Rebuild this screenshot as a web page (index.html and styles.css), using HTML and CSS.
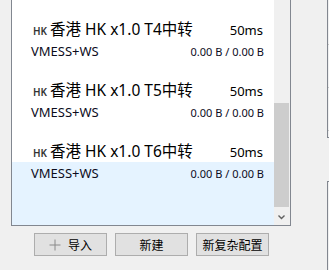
FILE: index.html
```html
<!DOCTYPE html>
<html>
<head>
<meta charset="utf-8">
<link rel="stylesheet" href="styles.css">
</head>
<body>
<div class="page">
  <div class="left">
    <div class="panel">
      <div class="list">
        <div class="item">
          <div class="title"><span class="name"><span class="flag">HK</span>香港 HK x1.0 T4中转</span><span class="ping">50ms</span></div>
          <div class="detail"><span class="proto">VMESS+WS</span><span class="traffic">0.00 B / 0.00 B</span></div>
        </div>
        <div class="item">
          <div class="title"><span class="name"><span class="flag">HK</span>香港 HK x1.0 T5中转</span><span class="ping">50ms</span></div>
          <div class="detail"><span class="proto">VMESS+WS</span><span class="traffic">0.00 B / 0.00 B</span></div>
        </div>
        <div class="item last">
          <div class="title"><span class="name"><span class="flag">HK</span>香港 HK x1.0 T6中转</span><span class="ping">50ms</span></div>
          <div class="detail selected"><span class="proto">VMESS+WS</span><span class="traffic">0.00 B / 0.00 B</span></div>
        </div>
      </div>
      <div class="scrollbar">
        <div class="track-top"></div>
        <div class="thumb"></div>
        <div class="track-rest"></div>
        <div class="arrow">
          <svg width="16" height="16" viewBox="0 0 16 16"><path d="M4.5 6.5 L7.5 9.5 L10.5 6.5" fill="none" stroke="#606060" stroke-width="1.4"/></svg>
        </div>
      </div>
    </div>
    <div class="buttons">
      <button class="btn"><svg class="plus" width="12" height="12" viewBox="0 0 12 12"><path d="M6 0.5 V11.5 M0.5 6 H11.5" stroke="#8a8a8a" stroke-width="1" fill="none"/></svg><span>导入</span></button>
      <button class="btn">新建</button>
      <button class="btn">新复杂配置</button>
    </div>
  </div>
  <div class="right">
    <div class="box-top">
      <div class="tick"></div>
      <div class="tick"></div>
      <div class="tick"></div>
    </div>
    <div class="box-bottom"></div>
  </div>
</div>
</body>
</html>
```
FILE: styles.css
```css
html, body {
  margin: 0;
  padding: 0;
  background: #f0f0f0;
  width: 329px;
  height: 270px;
  overflow: hidden;
}
.page {
  display: flex;
  height: 270px;
  font-family: "Noto Sans", "Noto Sans CJK SC", sans-serif;
}
.left {
  margin-left: 11px;
  width: 280px;
  display: flex;
  flex-direction: column;
}
.panel {
  height: 225px;
  border-left: 1px solid #828790;
  border-right: 1px solid #828790;
  border-bottom: 1px solid #828790;
  background: #ffffff;
  display: flex;
}
.list {
  width: 262px;
  padding-top: 18px;
  display: flex;
  flex-direction: column;
}
.item {
  display: flex;
  flex-direction: column;
}
.item.last {
  flex: 1;
}
.title {
  height: 22px;
  display: flex;
  align-items: baseline;
  justify-content: space-between;
  padding: 0 10px 0 19px;
  line-height: 22px;
}
.name {
  font-size: 15.5px;
  color: #000;
  white-space: nowrap;
}
.flag {
  font-size: 10px;
  font-weight: 600;
  color: #333;
  margin-left: 2px;
  margin-right: 3px;
}
.ping {
  font-size: 13px;
  color: #000;
  margin-right: 1px;
}
.detail {
  height: 36px;
  padding: 3px 10px 0 19px;
  display: flex;
  align-items: baseline;
  justify-content: space-between;
  line-height: 16px;
}
.detail.selected {
  background: #e5f3ff;
  flex: 1;
}
.proto {
  font-size: 13px;
  color: #0c0c1c;
}
.traffic {
  font-size: 11px;
  color: #0c0c1c;
}
.scrollbar {
  width: 16px;
  background: #f0f0f0;
  display: flex;
  flex-direction: column;
}
.track-top {
  height: 103px;
}
.thumb {
  height: 104px;
  width: 15px;
  background: #cdcdcd;
}
.track-rest {
  flex: 1;
}
.arrow {
  height: 17px;
  display: flex;
  align-items: center;
  justify-content: center;
}
.buttons {
  display: flex;
  gap: 8px;
  margin-top: 7px;
  padding-left: 23px;
}
.btn {
  width: 73px;
  height: 23px;
  margin: 0;
  padding: 0;
  border: 1px solid #adadad;
  background: #e1e1e1;
  font-family: "Noto Sans CJK SC", sans-serif;
  font-size: 12px;
  color: #000;
  display: flex;
  align-items: center;
  justify-content: center;
  gap: 7px;
}
.plus {
  display: block;
}
.right {
  margin-left: 36px;
  width: 2px;
  display: flex;
  flex-direction: column;
}
.box-top {
  border-left: 1px solid #828790;
  border-bottom: 1px solid #828790;
  display: flex;
  flex-direction: column;
  padding-top: 44px;
  gap: 42px;
  box-sizing: border-box;
  height: 138px;
}
.tick {
  height: 1px;
  width: 1px;
  background: #c8c8c8;
}
.box-bottom {
  margin-top: 43px;
  flex: 1;
  border-left: 1px solid #828790;
  border-top: 1px solid #828790;
}
```
